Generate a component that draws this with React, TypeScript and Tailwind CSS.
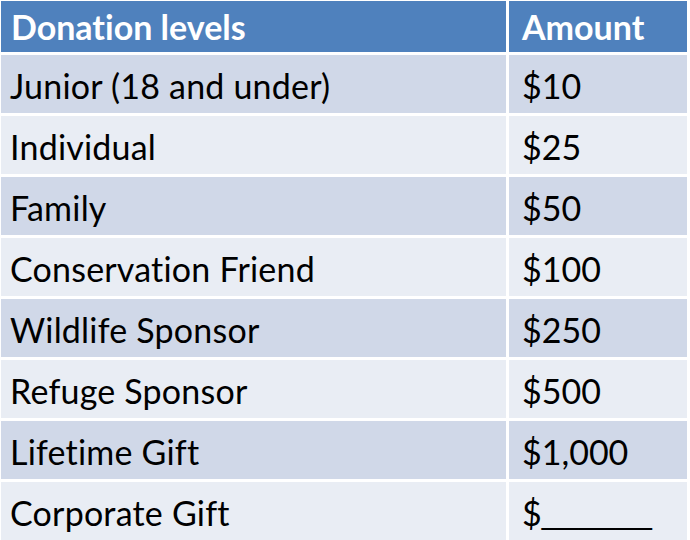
import * as React from "react";

const levels = [
  { name: "Junior (18 and under)", amount: "$10" },
  { name: "Individual", amount: "$25" },
  { name: "Family", amount: "$50" },
  { name: "Conservation Friend", amount: "$100" },
  { name: "Wildlife Sponsor", amount: "$250" },
  { name: "Refuge Sponsor", amount: "$500" },
  { name: "Lifetime Gift", amount: "$1,000" },
];

export default function App() {
  return (
    <div className="w-[690px] h-[540px] bg-white pl-[1px] pt-[1px] font-['Lato','Open_Sans',sans-serif] [font-variant-ligatures:none]">
      <div className="grid grid-cols-[505px_178px] gap-x-[3px] gap-y-[3px] w-[686px]">
        {/* header */}
        <div className="h-[51px] bg-[#4f81bd] text-white font-bold text-[34px] pl-[10px] flex items-center">
          Donation levels
        </div>
        <div className="h-[51px] bg-[#4f81bd] text-white font-bold text-[34px] pl-[13px] flex items-center">
          Amount
        </div>

        {levels.map((lv, i) => {
          const bg = i % 2 === 0 ? "bg-[#d0d8e8]" : "bg-[#e9edf4]";
          return (
            <React.Fragment key={lv.name}>
              <div className={`${bg} h-[58px] text-[34px] tracking-[0.2px] text-black pl-[9px] pt-[2px] flex items-center`}>
                {lv.name}
              </div>
              <div className={`${bg} h-[58px] text-[34px] text-black pl-[13px] pt-[2px] flex items-center`}>
                {lv.amount}
              </div>
            </React.Fragment>
          );
        })}

        {/* last row: blank amount to fill in */}
        <div className="bg-[#e9edf4] h-[58px] text-[34px] tracking-[0.2px] text-black pl-[9px] pt-[2px] flex items-center">
          Corporate Gift
        </div>
        <div className="bg-[#e9edf4] h-[58px] text-[34px] text-black pl-[13px] pt-[2px] flex items-center">
          $<span className="font-['Liberation_Sans',sans-serif] text-[33px]">______</span>
        </div>
      </div>
    </div>
  );
}
